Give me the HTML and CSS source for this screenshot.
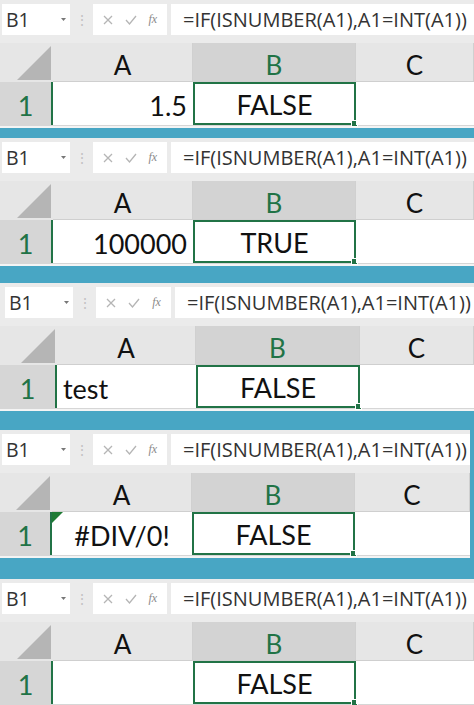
FILE: index.html
```html
<!DOCTYPE html>
<html lang="en">
<head>
  <meta charset="UTF-8">
  <title>ISNUMBER and INT check</title>
  <link rel="stylesheet" href="styles.css">
</head>
<body>

<div class="shots">

  <!-- 1.5 -->
  <section class="panel">
    <div class="fbar">
      <div class="namebox">B1<svg class="caret" width="5" height="3" viewBox="0 0 5 3"><path d="M0 0h5L2.5 3z"/></svg></div>
      <div class="grip">&#8942;</div>
      <div class="tools">
        <svg width="10" height="10" viewBox="0 0 10 10"><path d="M1 1l8 8M9 1l-8 8"/></svg>
        <svg width="12" height="10" viewBox="0 0 12 10"><path d="M1 5l3.5 4L11 1"/></svg>
        <span class="fx">fx</span>
      </div>
      <div class="formula">=IF(ISNUMBER(A1),A1=INT(A1))</div>
    </div>
    <div class="sheet">
      <div class="corner"></div>
      <div class="colhead">A</div>
      <div class="colhead sel">B</div>
      <div class="colhead">C</div>
      <div class="rowhead">1</div>
      <div class="cell right">1.5</div>
      <div class="cell active">FALSE</div>
      <div class="cell"></div>
    </div>
  </section>
  <div class="sep sep-1"></div>

  <!-- 100000 -->
  <section class="panel">
    <div class="fbar">
      <div class="namebox">B1<svg class="caret" width="5" height="3" viewBox="0 0 5 3"><path d="M0 0h5L2.5 3z"/></svg></div>
      <div class="grip">&#8942;</div>
      <div class="tools">
        <svg width="10" height="10" viewBox="0 0 10 10"><path d="M1 1l8 8M9 1l-8 8"/></svg>
        <svg width="12" height="10" viewBox="0 0 12 10"><path d="M1 5l3.5 4L11 1"/></svg>
        <span class="fx">fx</span>
      </div>
      <div class="formula">=IF(ISNUMBER(A1),A1=INT(A1))</div>
    </div>
    <div class="sheet">
      <div class="corner"></div>
      <div class="colhead">A</div>
      <div class="colhead sel">B</div>
      <div class="colhead">C</div>
      <div class="rowhead">1</div>
      <div class="cell right">100000</div>
      <div class="cell active">TRUE</div>
      <div class="cell"></div>
    </div>
  </section>
  <div class="sep sep-2"></div>

  <!-- test -->
  <section class="panel panel-wide">
    <div class="fbar">
      <div class="namebox">B1<svg class="caret" width="5" height="3" viewBox="0 0 5 3"><path d="M0 0h5L2.5 3z"/></svg></div>
      <div class="grip">&#8942;</div>
      <div class="tools">
        <svg width="10" height="10" viewBox="0 0 10 10"><path d="M1 1l8 8M9 1l-8 8"/></svg>
        <svg width="12" height="10" viewBox="0 0 12 10"><path d="M1 5l3.5 4L11 1"/></svg>
        <span class="fx">fx</span>
      </div>
      <div class="formula">=IF(ISNUMBER(A1),A1=INT(A1))</div>
    </div>
    <div class="sheet">
      <div class="corner"></div>
      <div class="colhead">A</div>
      <div class="colhead sel">B</div>
      <div class="colhead">C</div>
      <div class="rowhead">1</div>
      <div class="cell left">test</div>
      <div class="cell active">FALSE</div>
      <div class="cell"></div>
    </div>
  </section>
  <div class="sep sep-3"></div>

  <!-- #DIV/0! -->
  <section class="panel panel-edge">
    <div class="fbar">
      <div class="namebox">B1<svg class="caret" width="5" height="3" viewBox="0 0 5 3"><path d="M0 0h5L2.5 3z"/></svg></div>
      <div class="grip">&#8942;</div>
      <div class="tools">
        <svg width="10" height="10" viewBox="0 0 10 10"><path d="M1 1l8 8M9 1l-8 8"/></svg>
        <svg width="12" height="10" viewBox="0 0 12 10"><path d="M1 5l3.5 4L11 1"/></svg>
        <span class="fx">fx</span>
      </div>
      <div class="formula">=IF(ISNUMBER(A1),A1=INT(A1))</div>
    </div>
    <div class="sheet">
      <div class="corner"></div>
      <div class="colhead">A</div>
      <div class="colhead sel">B</div>
      <div class="colhead">C</div>
      <div class="rowhead">1</div>
      <div class="cell error">#DIV/0!</div>
      <div class="cell active">FALSE</div>
      <div class="cell"></div>
    </div>
  </section>
  <div class="sep sep-4"></div>

  <!-- empty -->
  <section class="panel">
    <div class="fbar">
      <div class="namebox">B1<svg class="caret" width="5" height="3" viewBox="0 0 5 3"><path d="M0 0h5L2.5 3z"/></svg></div>
      <div class="grip">&#8942;</div>
      <div class="tools">
        <svg width="10" height="10" viewBox="0 0 10 10"><path d="M1 1l8 8M9 1l-8 8"/></svg>
        <svg width="12" height="10" viewBox="0 0 12 10"><path d="M1 5l3.5 4L11 1"/></svg>
        <span class="fx">fx</span>
      </div>
      <div class="formula">=IF(ISNUMBER(A1),A1=INT(A1))</div>
    </div>
    <div class="sheet">
      <div class="corner"></div>
      <div class="colhead">A</div>
      <div class="colhead sel">B</div>
      <div class="colhead">C</div>
      <div class="rowhead">1</div>
      <div class="cell"></div>
      <div class="cell active">FALSE</div>
      <div class="cell"></div>
    </div>
  </section>

</div>

</body>
</html>
```

FILE: styles.css
```css
body {
  margin: 0;
  background: #fff;
  font-family: Lato, "Liberation Sans", sans-serif;
  color: #111;
}
.shots {
  width: 474px;
  height: 705px;
  overflow: hidden;
}

/* one excel snippet */
.panel {
  height: 128px;
  background: #ebebeb;
  box-sizing: border-box;
}
.panel-edge {
  border-right: 4px solid #48a6c4;
}
.sep {
  background: #48a6c4;
}
.sep-1 { height: 10px; }
.sep-2 { height: 17px; }
.sep-3 { height: 19px; }
.sep-4 { height: 21px; }

/* formula bar */
.fbar {
  display: flex;
  align-items: flex-start;
  height: 43px;
  padding: 4px 0 0 2px;
  box-sizing: border-box;
  font-family: "Open Sans", "Noto Sans", sans-serif;
}
.namebox,
.tools,
.formula {
  background: #fff;
  height: 31px;
  display: flex;
  align-items: center;
}
.namebox {
  width: 68px;
  padding-left: 4px;
  box-sizing: border-box;
  font-size: 19.5px;
  color: #333;
  position: relative;
}
.caret {
  fill: #777;
  position: absolute;
  right: 4px;
  top: 14px;
}
.grip {
  width: 23px;
  text-align: center;
  color: #c2c2c2;
  font-size: 14px;
  line-height: 31px;
}
.tools {
  width: 74px;
  justify-content: space-around;
  padding: 0 4px;
  box-sizing: border-box;
}
.tools svg {
  fill: none;
  stroke: #b5b5b5;
  stroke-width: 1.3;
}
.fx {
  font-family: "Liberation Serif", serif;
  font-style: italic;
  font-size: 12px;
  color: #8a8a8a;
}
.formula {
  flex: 1;
  margin-left: 4px;
  padding-left: 12px;
  font-size: 20px;
  color: #333;
  white-space: nowrap;
}

/* grid of headers and row 1 */
.sheet {
  display: grid;
  grid-template-columns: 53px 140px 163px 1fr;
  grid-template-rows: 39px 43px 3px;
}
.panel-wide .fbar {
  padding-left: 5px;
}
.panel-wide .tools {
  width: 75px;
}
.panel-wide .sheet {
  grid-template-columns: 57px 139px 164px 1fr;
}
.panel-edge .sheet {
  grid-template-columns: 52px 140px 163px 1fr;
}
.sheet::after {
  content: "";
  grid-column: 1 / -1;
  background: #f4f4f4;
  border-top: 1px solid #d6d6d6;
}
.corner {
  background: #e6e6e6;
  position: relative;
}
.corner::after {
  content: "";
  position: absolute;
  right: 2px;
  bottom: 2px;
  width: 34px;
  height: 34px;
  background: #b5b5b5;
  clip-path: polygon(100% 0, 100% 100%, 0 100%);
}
.colhead {
  background: #e6e6e6;
  border-right: 1px solid #d0d0d0;
  border-bottom: 1px solid #cfcfcf;
  display: flex;
  align-items: center;
  justify-content: center;
  padding-top: 6px;
  box-sizing: border-box;
  font-size: 26px;
  color: #111;
}
.colhead.sel {
  background: #d3d3d3;
  color: #217346;
}
.rowhead {
  background: #d6d6d6;
  border-right: 2px solid #217346;
  display: flex;
  align-items: center;
  justify-content: center;
  padding-top: 4px;
  box-sizing: border-box;
  font-size: 27px;
  color: #217346;
}
.cell {
  background: #fff;
  display: flex;
  align-items: center;
  padding: 4px 6px 0;
  box-sizing: border-box;
  font-size: 27px;
  color: #111;
  position: relative;
}
.cell.right {
  justify-content: flex-end;
}
.cell.left {
  justify-content: flex-start;
}
.cell.error {
  justify-content: center;
}
.cell.error::before {
  content: "";
  position: absolute;
  left: 0;
  top: 0;
  width: 11px;
  height: 11px;
  background: #1e7b34;
  clip-path: polygon(0 0, 100% 0, 0 100%);
}
.cell.active {
  border: 2px solid #217346;
  justify-content: center;
  padding-top: 2px;
}
.cell.active::after {
  content: "";
  position: absolute;
  right: -4px;
  bottom: -4px;
  width: 5px;
  height: 5px;
  background: #217346;
  border: 1px solid #fff;
}
```
